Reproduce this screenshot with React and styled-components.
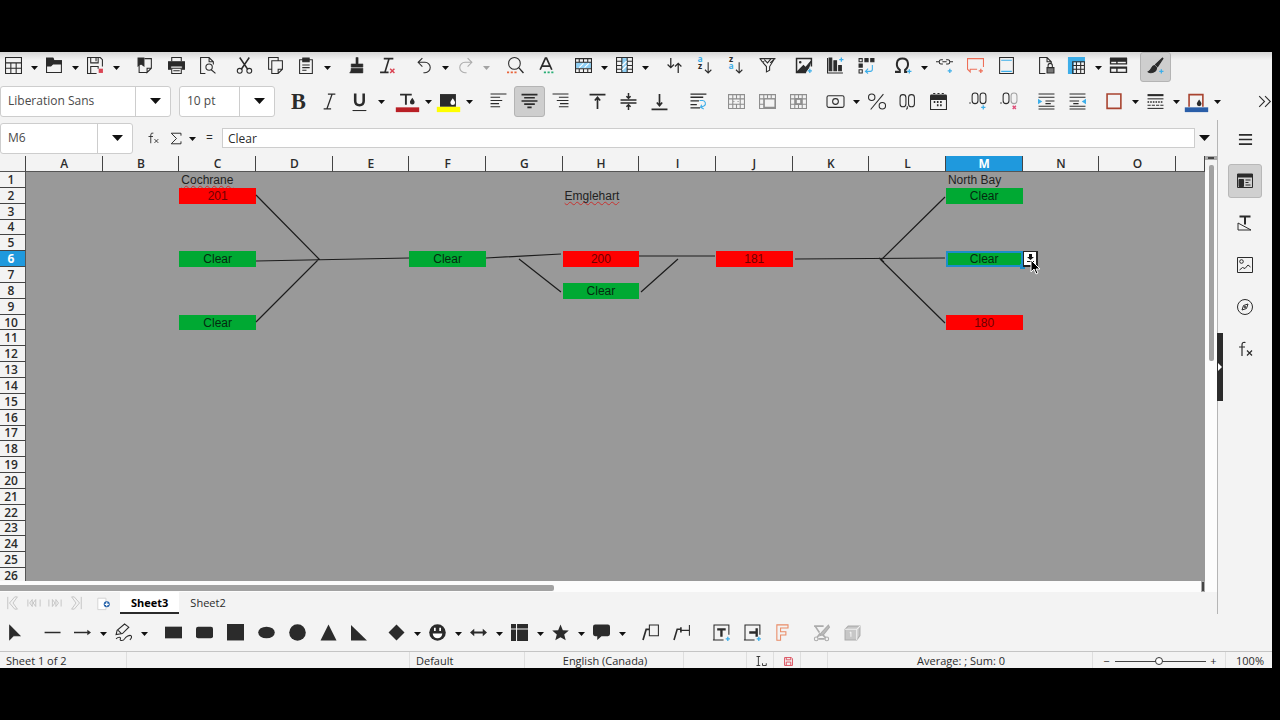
import React from "react";
import styled, { createGlobalStyle, css } from "styled-components";

const ink = "#2b2b2b";
const blue = "#3daee9";
const panel = "#f3f3f3";
const uiFont = '"Open Sans", "Noto Sans", sans-serif';
const cellFont = '"Liberation Sans", Arial, sans-serif';

const GlobalStyle = createGlobalStyle`
  *, *::before, *::after { box-sizing: border-box; }
  body { margin: 0; background: #000; font: 12px/16px ${uiFont}; color: #2b2b2b; }
  button, input, select { font: inherit; color: inherit; margin: 0; }
`;

const Screen = styled.div`
  display: flex;
  height: 100vh;
  padding: 52px 8px 52px 0;
  background: #000;
`;

const Window = styled.main`
  flex: 1;
  min-width: 0;
  display: flex;
  flex-direction: column;
  overflow: hidden;
  background: linear-gradient(#d6d6d6, ${panel} 8px);
`;

const Bar = styled.div`
  display: flex;
  flex: none;
  align-items: ${(p) => (p.$stretch ? "stretch" : "center")};
  height: ${(p) => p.$height}px;
  margin-left: ${(p) => p.$shift || 0}px;
`;

const Gap = styled.span`
  flex: none;
  width: ${(p) => (p.$wide ? 9 : 6)}px;
`;

const ToolButton = styled.button`
  flex: none;
  display: flex;
  align-items: center;
  justify-content: center;
  width: 31px;
  height: ${(p) => (p.$short ? "auto" : "31px")};
  padding: ${(p) => (p.$short ? "0 0 4px" : "0")};
  border: 1px solid transparent;
  border-radius: 3px;
  background: none;
  opacity: ${(p) => (p.disabled ? 0.35 : 1)};
  ${(p) =>
    p.$active &&
    css`
      background: #cecece;
      border-color: #b4b4b4;
    `}
`;

const MenuButton = styled.button`
  flex: none;
  display: flex;
  align-items: center;
  justify-content: center;
  width: 10px;
  padding: 2px 0 0;
  border: 0;
  background: none;
  opacity: ${(p) => (p.disabled ? 0.35 : 1)};
`;

const Glyph = styled.svg`
  display: block;
  flex: none;
  overflow: visible;
  fill: none;
  stroke: ${ink};
  text {
    stroke: none;
    fill: ${ink};
  }
`;

const ComboBox = styled.div`
  position: relative;
  flex: none;
  width: ${(p) => p.$width}px;
  height: 31px;
  margin-right: 8px;
`;

const ComboSelect = styled.select`
  appearance: none;
  width: 100%;
  height: 100%;
  padding: 0 36px 0 7px;
  border: 1px solid #cdcdcd;
  border-radius: 3px;
  background: #fff;
  color: #4a4a4a;
`;

const ComboArrow = styled.span`
  position: absolute;
  top: 1px;
  right: 1px;
  bottom: 1px;
  width: 35px;
  display: flex;
  align-items: center;
  justify-content: center;
  padding-left: 4px;
  border-left: 1px solid #cdcdcd;
  pointer-events: none;
`;

const OverflowButton = styled(ToolButton)`
  width: 16px;
  margin-left: auto;
`;

const Workspace = styled.div`
  flex: 1;
  min-height: 0;
  display: flex;
`;

const Document = styled.div`
  flex: 1;
  min-width: 0;
  display: flex;
  flex-direction: column;
`;

const FormulaBar = styled(Bar)`
  padding-right: 4px;
`;

const FormulaButton = styled.button`
  flex: none;
  display: flex;
  align-items: center;
  justify-content: center;
  width: ${(p) => p.$width}px;
  height: 24px;
  padding: 0;
  border: 0;
  background: none;
`;

const FormulaInput = styled.input`
  flex: 1;
  min-width: 0;
  height: 20px;
  padding: 0 5px;
  border: 1px solid #cdcdcd;
  background: #fff;
`;

const SheetArea = styled.div`
  flex: 1;
  min-height: 0;
  display: flex;
`;

const Canvas = styled.div`
  position: relative;
  flex: 1;
  min-width: 0;
  overflow: hidden;
  background: #999;
`;

const Grid = styled.table`
  width: 100%;
  height: 428px;
  table-layout: fixed;
  border-collapse: separate;
  border-spacing: 0;
`;

const headCell = css`
  background: ${(p) => (p.$selected ? "#1f99dd" : panel)};
  color: ${(p) => (p.$selected ? "#fff" : ink)};
  font-weight: ${(p) => (p.$selected ? 700 : 600)};
  line-height: 13px;
`;

const ColumnHead = styled.th`
  ${headCell}
  height: 16px;
  padding: 0 0 0 1px;
  border-right: 1px solid #444;
  border-bottom: 1px solid #555;
`;

const RowHead = styled.th`
  ${headCell}
  padding: 0 3px 0 0;
  border-right: 1px solid #555;
  border-bottom: 1px solid #444;
`;

const fills = { red: "#ff0000", green: "#00a933" };
const texts = { red: "#6e0000", green: "#042b10" };

const Cell = styled.td`
  position: relative;
  padding: ${(p) => (p.$tone ? "1px 0 0" : "1px 0 0 2px")};
  background: ${(p) => fills[p.$tone] || "transparent"};
  color: ${(p) => texts[p.$tone] || "#222"};
  font: 12px/13px ${cellFont};
  white-space: nowrap;
  text-align: ${(p) => (p.$tone ? "center" : "left")};
  ${(p) =>
    p.$selected &&
    css`
      box-shadow: inset 0 0 0 2px #1c8ec9;
    `}
`;

const Misspelt = styled.span`
  text-decoration: underline wavy #c8322f 1px;
  text-decoration-skip-ink: none;
  text-underline-offset: 1px;
`;

const FillHandle = styled.span`
  position: absolute;
  right: -2px;
  bottom: -2px;
  width: 5px;
  height: 5px;
  background: #1c8ec9;
`;

const CellMenu = styled.button`
  position: absolute;
  z-index: 2;
  left: 100%;
  top: 0;
  width: 15px;
  height: 16px;
  padding: 0;
  border: 1px solid #222;
  border-width: 1px 2px 2px 1px;
  background: #fff;
`;

const Pointer = styled.svg`
  position: absolute;
  z-index: 3;
  left: calc(100% + 7px);
  top: 8px;
`;

const Tracks = styled.svg`
  position: absolute;
  left: 0;
  top: 0;
  width: 100%;
  height: 428px;
  pointer-events: none;
`;

const VerticalScroll = styled.div`
  flex: none;
  width: 12px;
  display: flex;
  flex-direction: column;
  align-items: center;
  background: linear-gradient(${panel} 14px, #fcfcfc 14px);
`;

const SplitTop = styled.span`
  width: 12px;
  height: 4px;
  margin-bottom: 5px;
  border: 1px solid #aaa;
  border-width: 1px 3px;
  background: #444;
`;

const VerticalThumb = styled.span`
  width: 5px;
  height: 46%;
  border-radius: 2px;
  background: #a2a2a2;
`;

const HorizontalScroll = styled.div`
  flex: none;
  height: 11px;
  display: flex;
  align-items: center;
  justify-content: space-between;
  padding-right: 12px;
  background: #fcfcfc;
`;

const HorizontalThumb = styled.span`
  width: 46%;
  height: 6px;
  margin-top: 2px;
  border-radius: 0 2px 2px 0;
  background: #a2a2a2;
`;

const SplitSide = styled.span`
  width: 4px;
  height: 11px;
  border: 1px solid #aaa;
  background: #444;
`;

const TabBar = styled.div`
  flex: none;
  display: flex;
  height: 22px;
  padding-left: 2px;
`;

const TabTool = styled.button`
  width: ${(p) => (p.$add ? 34 : 21)}px;
  padding: 0;
  border: 0;
  background: none;
  display: flex;
  align-items: center;
  justify-content: center;
`;

const SheetTab = styled.button`
  height: 22px;
  padding: 2px 11px 0;
  border: 0;
  border-bottom: 2px solid ${(p) => (p.$active ? "#2b2b2b" : "transparent")};
  background: ${(p) => (p.$active ? "#fff" : "none")};
  color: ${(p) => (p.$active ? "#000" : ink)};
  font-size: 11px;
  font-weight: ${(p) => (p.$active ? 700 : 400)};
`;

const Sidebar = styled.aside`
  position: relative;
  flex: none;
  width: 55px;
  display: flex;
  flex-direction: column;
  align-items: center;
  gap: 8px;
  padding-top: 2px;
  border-left: 1px solid #b5b5b5;
`;

const SideButton = styled.button`
  width: 34px;
  height: 34px;
  padding: 0;
  display: flex;
  align-items: center;
  justify-content: center;
  border: 1px solid ${(p) => (p.$active ? "#b8b8b8" : "transparent")};
  border-radius: 3px;
  background: ${(p) => (p.$active ? "#d0d0d0" : "none")};
`;

const SideHandle = styled.button`
  position: absolute;
  left: -1px;
  top: 50%;
  width: 6px;
  height: 68px;
  margin-top: -34px;
  padding: 0;
  border: 0;
  background: #2b2b2b;
`;

const StatusBar = styled.footer`
  flex: none;
  display: grid;
  grid-template-columns: 127px 283fr 115fr 159fr 63px 27px 27px 27px 265fr 133px 46px;
  height: 17px;
  border-top: 1px solid #c4c4c4;
  font-size: 11px;
  line-height: 14px;
`;

const StatusField = styled.div`
  display: flex;
  align-items: center;
  justify-content: ${(p) => (p.$start ? "flex-start" : "center")};
  padding: 2px 0 0 ${(p) => (p.$start ? 6 : 2)}px;
  border-right: 1px solid #dedede;
  white-space: nowrap;
  &:last-child {
    border-right: 0;
  }
`;

const ZoomStep = styled.button`
  width: 16px;
  height: 14px;
  padding: 0;
  border: 0;
  background: none;
  line-height: 14px;
`;

const ZoomRange = styled.input`
  appearance: none;
  width: 91px;
  height: 9px;
  background: linear-gradient(transparent 4px, #444 4px, #444 5px, transparent 5px);
  &::-webkit-slider-thumb {
    appearance: none;
    width: 8px;
    height: 8px;
    border: 1px solid #333;
    border-radius: 50%;
    background: #fff;
  }
`;

const T = ({ x = 8, y = 14, size = 17, children, ...rest }) => (
  <text x={x} y={y} fontSize={size} textAnchor="middle" fontFamily="Open Sans" {...rest}>
    {children}
  </text>
);
const Plus = ({ x = 13, y = 13, color = blue }) => (
  <path d={`M${x - 2} ${y}h4M${x} ${y - 2}v4`} stroke={color} strokeWidth="1.2" />
);
const mergeGrid = "M.5 1.5h15v13h-15zM.5 5.5h15M.5 10.5h15M4.5 1.5v13M11.5 1.5v13M8 1.5v4M8 10.5v4";
const Drop = ({ x, y, fill = ink }) => (
  <path d={`M${x} ${y}c1.5 2.2 2.2 3 2.2 4.2a2.2 2.2 0 0 1-4.4 0c0-1.2.7-2 2.2-4.2z`} fill={fill} stroke="none" />
);

const icons = {
  sheet: <path d="M.5 .5h15v15h-15zM.5 5.500h15M.5 10.500h15M5.500 5.500v10M10.500 5.500v10" />,
  open: <><path d="M.5 14.500v-13h6l1 2h7v11z" /><path d="M.5 1h6l1 2.500h7v3h-8l-2 2h-4z" fill={ink} /></>,
  save: <><path d="M9 15.500H.5V.5h12l2 2V9M3.500 .5v5h7v-5M8.500 1v3M3.500 15V9h7v2" /><path d="M11 11h4v4h-4z" fill="#da4453" stroke="none" /></>,
  exportDoc: <><path d="M2 8v6.500h7M7 1.500h6.500v9l-4 4v-4h4M4 14.500h5" /><path d="M1 1h5.500v7.500l-2.700-2L1 8.500z" fill={ink} /></>,
  print: <><path d="M3.500 4V.5h9V4M3.500 10.500h9v5h-9zM5 13h6" /><path d="M.5 4.500h15v7h-2v-3h-11v3h-2z" fill={ink} /></>,
  preview: <><path d="M6 15.500H1.500V.5h8l4 4V7M9.500 .5v4h4" /><circle cx="9.500" cy="9.500" r="3" /><path d="M11.500 12l4 3.500" /></>,
  cut: <><path d="M3.500 .5l7.500 11M12.500 .5L5 11.500" strokeWidth="1.400" /><circle cx="3.500" cy="13" r="2.300" /><circle cx="12.500" cy="13" r="2.300" /></>,
  copy: <path d="M4 11.500H1.500v-11h9V3M4.500 3.500h10v8l-4 4h-6zM10.500 15v-3.500h4" />,
  paste: <><path d="M1.500 2.500h12v13h-12zM4 7.500h7M4 10h7M4 12.500h4" /><path d="M4.500 1h6v3.500h-6z" fill={ink} /></>,
  brush: <path d="M7.500 .5h2v6h4.500v3H3v-3h4.500zM3 10.500h11v4.500H1.500c1-1 1.500-2 1.500-4.500z" fill={ink} strokeWidth=".5" />,
  clear: <><path d="M4.500 1.500h9M1 14.500h8M9.500 1.500l-4 13" strokeWidth="1.500" /><path d="M10.500 11l4 4M14.500 11l-4 4" stroke="#da4453" strokeWidth="1.400" /></>,
  undo: <path d="M6 1L2 5l4 4M2 5h6.500a4.800 4.800 0 0 1 0 9.800H7" />,
  redo: <path d="M10 1l4 4-4 4M14 5H7.500a4.800 4.800 0 0 0 0 9.800H9" />,
  find: <><circle cx="7" cy="6" r="5.500" /><path d="M11 10l4.500 5" strokeWidth="1.300" /><path d="M0 14.500h2M3.500 14.500h2M7 14.500h2" stroke="#e9643a" strokeWidth="1.500" /></>,
  spell: <><path d="M2 12L7 1h1l5 11M4 8.500h7" strokeWidth="1.600" /><path d="M5.500 14.500h2M9 14.500h2M12.500 14.500h2" stroke="#27ae75" strokeWidth="1.500" /></>,
  row: <><path d="M1 5h14v5.500H1z" fill="#8fd0f5" stroke="none" /><path d="M.5 1.500h15v13h-15zM.5 5h15M.5 11h15M4 1.500V5M8 1.500V5M12 1.500V5M4 11v3.500M8 11v3.500M12 11v3.500" /><path d="M4 10l4-4M9 10l4-4" stroke="#fff" /></>,
  column: <><path d="M5.500 1h5v14h-5z" fill="#8fd0f5" stroke="none" /><path d="M.5 .5h15v14h-15zM5.500 .5v14M10.500 .5v14M.5 4h5M.5 8h5M.5 11.500h5M10.500 4h5M10.500 8h5M10.500 11.500h5" /><path d="M6 8l4-4M6 12l4-4" stroke="#fff" /></>,
  sort: <path d="M4.500 1v9M1.500 7l3 3 3-3M11.500 15V6M8.500 9l3-3 3 3" strokeWidth="1.200" />,
  az: <><T x={3} y={5} size={8} fontWeight="700" style={{ fill: blue }}>a</T><T x={3} y={11} size={8} fontWeight="700">z</T><path d="M10.500 5v10M7.500 12l3 3 3-3" /></>,
  za: <><T x={3} y={5} size={8} fontWeight="700">z</T><T x={3} y={11} size={8} fontWeight="700" style={{ fill: blue }}>a</T><path d="M10.500 5v10M7.500 12l3 3 3-3" /></>,
  filter: <path d="M.5 1.500h15M1 1.500l2 3h2M3.500 5l3.500 4v5l3-1.500V9l4-6.500M5 2.500l3 3 3-3.500M10.500 5.500l4-3.500" />,
  image: <><path d="M14.500 9V1.500h-14v13h9" strokeWidth="1.400" /><path d="M1 14l6-6 2 2 5-6-2 6-3 4z" fill={ink} /><circle cx="4" cy="5" r=".7" fill={ink} /><Plus /></>,
  chart: <><path d="M2 1h2.500v12H2zM6.500 3.500H9V13H6.500zM11 8h2.500v5H11z" fill={ink} /><path d="M.5 1v14H15" /><Plus x={13.500} y={2.500} /></>,
  pivot: <><path d="M1 1.500h3v3H1zM1 12h3v3H1z" /><path d="M6.500 1.500h3v3h-3zM12 1.500h3v3h-3zM1 6.500h3v3H1z" fill={ink} /><path d="M13.500 7.500v4a2 2 0 0 1-2 2h-4M9.500 11l-2.500 2.500 2.500 2" stroke={blue} /></>,
  omega: <><path d="M0 14h4.500v-2C.5 9.500.5 1.500 7 1.500s6.500 8 2.500 10.500v2h2" strokeWidth="1.900" /><Plus x={13.500} y={13.500} /></>,
  link: <><path d="M0 4.500h3M6.500 2.500h-2a1.500 2 0 0 0 0 4h2M9.500 2.500h2a1.500 2 0 0 1 0 4h-2M13 4.500h3M6 4.500h4" /><Plus y={13} /></>,
  comment: <><path d="M9.500 11.500H3v2.500L.5 11.500v-10h15v8" stroke="#ee6f58" /><Plus color="#ee6f58" /></>,
  headerFooter: <><path d="M1.500 .5h13v15h-13z" /><path d="M3 3h10M3 13.500h10" stroke={blue} /></>,
  printArea: <><path d="M7 15.500H1.500V.5h7l4 4V6M8.500 .5v4h4M9.500 10V8a2 2 0 0 1 4 0v2" /><path d="M8.500 10h6.500v5H8.500z" fill="#777" /></>,
  freeze: <><path d="M-.5 .5h15v4H4v11H-.5z" fill={blue} stroke={blue} /><path d="M3.500 4.500h11v11h-11zM3.500 8h11M3.500 11.500h11M7 4.500v11M11 4.500v11" /></>,
  split: <><path d="M.5 1h15v3H.5z" fill={ink} /><path d="M.5 1.500h15v5H.5zM.5 9.500h15v5H.5zM6.500 2v5M6.500 9.500v5M.5 10.500h15" strokeWidth="1.300" /></>,
  draw: <><path d="M14.500 1L8 7l2 2 5-7.500zM7 8c-3 0-2 4-6 6 3 2 8 0 8-4z" fill={ink} /><Plus x={13.500} y={13.500} /></>,
  bold: <T size={21} y={15} fontWeight="700" fontFamily="Liberation Serif">B</T>,
  italic: <path d="M6.500 1h7M2.500 15h7M10.500 1l-5 14" strokeWidth="1.200" />,
  underline: <><path d="M3 .5v7q0 4 4 4t4-4v-7" strokeWidth="2.400" /><path d="M.5 16.500h13" /></>,
  fontColor: <><path d="M1 1.500h11M6.500 1.500V11" strokeWidth="1.800" /><Drop x={12.500} y={4.500} /><path d="M-3 13.500h22v4.500H-3z" fill="#b81f25" stroke="none" /></>,
  highlight: <><path d="M0 1h15v12H0z" fill={ink} stroke="none" /><Drop x={12} y={5} fill="#fff" /><path d="M-3 13h22v5H-3z" fill="#ffff00" stroke="none" /></>,
  left: <path d="M.5 1h15M.5 4h9M.5 7h11M.5 10h8M.5 13h9" />,
  center: <path d="M.5 1.500h15M3 4.500h10M.5 7.500h15M3 10.500h10M6 13.500h4" strokeWidth="1.500" />,
  right: <path d="M.5 1h15M6.500 4h9M4.500 7h11M7.500 10h8M6.500 13h9" />,
  top: <path d="M.5 1.500h15M8 15V4M5.500 7L8 4l2.500 3" strokeWidth="1.600" />,
  middle: <path d="M.5 6.500h15M.5 9.500h15M8 0v5M6 3l2 2 2-2M8 16v-5M6 13l2-2 2 2" strokeWidth="1.400" />,
  bottom: <path d="M.5 15.500h15M8 1v11M5.500 9L8 12l2.500-3" strokeWidth="1.600" />,
  wrap: <><path d="M-.5 1h15M-.5 4h12M-.5 7.500h8M-.5 11h6M-.5 14h9" strokeWidth="1.200" /><path d="M8 7h3a2.800 2.800 0 0 1 1.500 5l-3 1.500M12 15l-3-1.500 1-2.500" stroke={blue} /></>,
  merge: <g opacity=".5"><path d={mergeGrid} /><path d="M5 8h2M9 8h2" strokeDasharray="1 1" /></g>,
  mergeCells: <g opacity=".5"><path d={mergeGrid} /><path d="M5 5.500h10v8H5z" fill={panel} /></g>,
  unmerge: <g opacity=".5"><path d={mergeGrid} /><path d="M5.500 5.500h5v5h-5z" strokeWidth="1.800" /></g>,
  currency: <><rect x="0" y="2.500" width="16" height="11" rx="1.500" /><circle cx="8" cy="8" r="2.700" /></>,
  percent: <><circle cx="3.500" cy="4" r="3" /><circle cx="13.500" cy="12" r="3" /><path d="M14.500 1L2.500 15.500" /></>,
  number: <><rect x="1" y="1.500" width="5.500" height="11.500" rx="2.700" /><rect x="9" y="1.500" width="5.500" height="11.500" rx="2.700" /><path d="M7.800 12.500v2l-1 1" /></>,
  date: <><path d="M.5 2.500h15v13h-15z" /><path d="M1 2h14v4H1zM3 .5h2M7 .5h2M11 .5h2" fill={ink} /><path d="M3.500 8.500h9M6.500 11.500h6" strokeWidth="1.800" strokeDasharray="1.500 1.500" /></>,
  addDecimal: <><rect x="2" y="0" width="5.500" height="10" rx="2.700" /><rect x="9.500" y="0" width="5.500" height="10" rx="2.700" /><path d="M-.5 9.500h1" strokeWidth="1.400" /><Plus x={12.500} y={13.500} /></>,
  delDecimal: <><rect x="2" y="0" width="5.500" height="10" rx="2.700" /><rect x="9.500" y="0" width="5.500" height="10" rx="2.700" opacity=".4" /><path d="M-.5 9.500h1" strokeWidth="1.400" /><path d="M11 12l3 3M14 12l-3 3" stroke="#e0507a" strokeWidth="1.400" /></>,
  indent: <><path d="M.5 1h15M.5 4h15M7 7.500h8.500M7 10h5M.5 12.500h15M.5 15h15" /><path d="M0 5.500v5L4 8z" fill={blue} stroke="none" /></>,
  outdent: <><path d="M.5 1h15M.5 4h15M.5 7.500h9M4 10h5M.5 12.500h15M.5 15h15" /><path d="M16 5.500v5L12 8z" fill={blue} stroke="none" /></>,
  border: <path d="M1 1h13v13.500H1z" stroke="#a8432f" strokeWidth="1.500" />,
  lineStyle: <><path d="M.5 2h15" strokeWidth="2" /><path d="M.5 5.500h15" /><path d="M.5 8.500h15" strokeWidth="1.500" strokeDasharray="1.500 1" /><path d="M.5 11.500h15" strokeDasharray="3 1" /><path d="M.5 14.500h15" /></>,
  lineColor: <><path d="M1 13V1.500h13V13" stroke="#a8432f" strokeWidth="1.500" /><Drop x={10.500} y={6} /><path d="M-3 13.500h22v4.500H-3z" fill="#2a5ea8" stroke="none" /></>,
  more: <path d="M3 3l5 5-5 5M8.500 3l5 5-5 5" />,
  sum: <path d="M13.500 4.500v-3h-12L8 8l-6.500 6.500h12v-3" strokeWidth="1.200" />,
  menu: <path d="M1 3h14M1 8h14M1 13h14" strokeWidth="1.800" />,
  properties: <><path d="M.5 1.500h15v13H.5z" /><path d="M.5 1h15v3H.5z M2 6.500h4.500v7H2z" fill={ink} /><path d="M8.500 7h5M8.500 9.500h3M8.500 12h5" /></>,
  styles: <><path d="M2.500 1.500h11M8 1.500v8" strokeWidth="2" /><path d="M1 8v7h13z" /></>,
  gallery: <><path d="M.5 .5h15v15H.5zM2.500 13l3-2.500 2.500 1 3-3.500 2.500 2" /><circle cx="4.500" cy="4.500" r="1.800" /></>,
  navigator: <><circle cx="8" cy="8" r="7.500" /><path d="M11 5L9.500 9.500 5 11l1.500-4.500z" /><circle cx="8" cy="8" r=".8" /></>,
  fx: <path d="M8.500 1.500q-3.500-1-3.500 2.500v11M2 6h6M10 9.500l5 5M15 9.500l-5 5" strokeWidth="1.200" />,
  select: <path d="M3.500 1.500v13l3.500-3.500H13z" fill={ink} />,
  line: <path d="M1.500 8h15" strokeWidth="1.400" />,
  arrow: <><path d="M0 8h13" strokeWidth="1.400" /><path d="M12.500 5.500v5L16 8z" fill={ink} stroke="none" /></>,
  pencil: <path d="M1 10l1-4 7-6 4 3-6 6-6 1zM3 6l3 3M1 14c2-2 5-2 4 0s3 2 4 0 5-4 6-3 0 3-1 4" />,
  rect: <path d="M0 2.500h16v11H0z" fill={ink} stroke="none" />,
  roundRect: <rect x="0" y="2.500" width="16" height="11" rx="2" fill={ink} stroke="none" />,
  square: <path d="M0 0h16v15.500H0z" fill={ink} stroke="none" />,
  ellipse: <ellipse cx="8" cy="8" rx="7.800" ry="5.500" fill={ink} stroke="none" />,
  circle: <circle cx="8" cy="8" r="7.800" fill={ink} stroke="none" />,
  triangle: <path d="M8 .5l7.500 15H.5z" fill={ink} stroke="none" />,
  rightTriangle: <path d="M0 1v14.500h15z" fill={ink} stroke="none" />,
  diamond: <path d="M8 .5L15.500 8 8 15.500.5 8z" fill={ink} stroke="none" />,
  smiley: <><circle cx="8" cy="8" r="7.800" fill={ink} stroke="none" /><path d="M3.500 9h9a4.500 4.500 0 0 1-9 0z" fill="#fff" stroke="none" /><path d="M5.500 3.500v3M10.500 3.500v3" stroke="#fff" strokeWidth="1.600" /></>,
  doubleArrow: <path d="M0 8l4-3.500V7h8V4.500L16 8l-4 3.500V9H4v2.500z" fill={ink} stroke="none" />,
  flow: <><path d="M0 0h16v16H0z" fill={ink} stroke="none" /><path d="M5.200 0v16M0 4.700h16" stroke={panel} /></>,
  star: <path d="M8 .5l2.200 5.300 5.600.4-4.300 3.600 1.400 5.600L8 12.400l-4.900 3 1.400-5.600L.2 6.200l5.600-.4z" fill={ink} stroke="none" />,
  callout: <path d="M2 .5h12a2 2 0 0 1 2 2v7a2 2 0 0 1-2 2H8L4 15v-3.500H2a2 2 0 0 1-2-2v-7a2 2 0 0 1 2-2z" fill={ink} stroke="none" />,
  calloutLine: <><path d="M6 1h8.500v10H6z" /><path d="M6 5H3L0 15" strokeWidth="1.600" /></>,
  calloutSide: <><path d="M14.500 1v10M6 6h8.500" /><path d="M6.500 3v5M6 5H3L0 15" strokeWidth="1.500" /></>,
  textBox: <><path d="M-.5 1h15M14 1v9M9 15H0V1M-1 15h2" /><path d="M3 5h8M7 5v7" strokeWidth="2.200" /><Plus x={13} y={14} /></>,
  verticalText: <><path d="M-.5 1h15M14 1v9M9 15H0V1M-1 15h2" /><path d="M11 4v8M4 8h7" strokeWidth="2.200" /><Plus x={13} y={14} /></>,
  fontwork: <path d="M.8 .8h10.500v3h-7v3.500h5v3h-5v5H.8z" stroke="#e98b66" />,
  points: <><path d="M1 2h9M2 2l4 6M5 14h6M4 12.500l3-4M9 10l3 3" strokeWidth="1.500" /><circle cx="3" cy="14" r="1.700" /><circle cx="13" cy="14" r="1.700" /><path d="M14.500 1L8 8l-1.500 3L10 10l5.500-7z" fill="#555" /></>,
  extrusion: <><path d="M1 5l3-3h11v9l-3 4H1z" fill="#777" /><path d="M1 5h11v10M12 5l3-3M6.500 12V7.500M5.500 8.500l1-1" stroke="#eee" /></>,
  first: <path d="M2 1v14M10 1L4 8l6 7h3L8 8l5-7z" />,
  prev: <path d="M1 4v8M6 4L3 8l3 4zM10 4L7 8l3 4zM15 4v8" />,
  next: <path d="M1 4v8M5 4l3 4-3 4zM9 4l3 4-3 4zM15 4v8" />,
  last: <path d="M14 1v14M6 1l6 7-6 7H3l5-7-5-7z" />,
  addSheet: <><path d="M1 1.500h10v14H1z" fill="#fff" stroke="#ccc" /><circle cx="12" cy="9" r="3.700" fill="#215fa8" stroke="none" /><path d="M12 6.500v5M9.500 9h5" stroke="#fff" strokeWidth="1.500" /></>,
  insertMode: <path d="M2 2h5M2 14h5M4.500 2v12M10 11v3h5v-3" strokeWidth="1.200" />,
  modified: <path d="M1 1h12l2 2v12H1zM4 1v4h8V1M4 15V9h8v6" stroke="#da4453" strokeWidth="1.600" />,
};

const Icon = ({ name, size = 17 }) => (
  <Glyph width={size} height={size} viewBox="0 0 16 16" aria-hidden="true">
    {icons[name]}
  </Glyph>
);

const Triangle = ({ large }) => (
  <svg width={large ? 11 : 7} height={large ? 6 : 4} viewBox="0 0 12 7" preserveAspectRatio="none" aria-hidden="true">
    <path d="M0 0h12L6 7z" fill="#111" />
  </svg>
);

/* "-" is a narrow gap, "=" a wide one; a trailing "+" gives the button a menu. */
const standardTools =
  "sheet+ open+ save+ = exportDoc print preview - cut copy paste+ = brush clear - undo+ redo+ = find spell - row+ column+ = sort az za filter - image chart pivot - omega+ link comment headerFooter = printArea freeze+ split - draw";
const formatTools =
  "bold italic underline+ - fontColor+ highlight+ = left center right - top middle bottom = wrap - merge mergeCells unmerge - currency+ percent number date = addDecimal delDecimal - indent outdent - border+ lineStyle+ lineColor+";
const drawTools =
  "select - line arrow+ pencil+ = rect roundRect square ellipse circle triangle rightTriangle - diamond+ smiley+ doubleArrow+ flow+ star+ callout+ = calloutLine calloutSide = textBox verticalText fontwork - points extrusion";

const Tools = ({ spec, active, disabled = [], short }) =>
  spec.split(" ").map((item, i) => {
    if (item === "-" || item === "=") return <Gap key={i} $wide={item === "="} />;
    const name = item.replace("+", "");
    const off = disabled.includes(name);
    return (
      <React.Fragment key={i}>
        <ToolButton type="button" aria-label={name} $active={name === active} $short={short} disabled={off}>
          <Icon name={name} />
        </ToolButton>
        {item.endsWith("+") && (
          <MenuButton type="button" aria-label={`${name} options`} disabled={off}>
            <Triangle />
          </MenuButton>
        )}
      </React.Fragment>
    );
  });

const Combo = ({ label, value, width }) => (
  <ComboBox $width={width}>
    <ComboSelect aria-label={label} defaultValue={value}>
      <option>{value}</option>
    </ComboSelect>
    <ComboArrow>
      <Triangle large />
    </ComboArrow>
  </ComboBox>
);

const columns = "ABCDEFGHIJKLMNO".split("");
const rows = Array.from({ length: 26 }, (_, i) => i + 1);
const cells = {
  C1: { text: "Cochrane", misspelt: true },
  M1: { text: "North Bay" },
  C2: { text: "201", tone: "red" },
  H2: { text: "Emglehart", misspelt: true },
  M2: { text: "Clear", tone: "green" },
  C6: { text: "Clear", tone: "green" },
  F6: { text: "Clear", tone: "green" },
  H6: { text: "200", tone: "red" },
  J6: { text: "181", tone: "red" },
  M6: { text: "Clear", tone: "green", selected: true },
  H8: { text: "Clear", tone: "green" },
  C10: { text: "Clear", tone: "green" },
  M10: { text: "180", tone: "red" },
};

const SheetCell = ({ id }) => {
  const cell = cells[id];
  if (!cell) return <Cell />;
  return (
    <Cell $tone={cell.tone} $selected={cell.selected}>
      {cell.misspelt ? <Misspelt>{cell.text}</Misspelt> : cell.text}
      {cell.selected && (
        <>
          <FillHandle />
          <CellMenu type="button" aria-label="Choose value">
            <svg width="10" height="12" viewBox="0 0 10 12" aria-hidden="true">
              <path d="M4 2h3v3h2L5.500 8 2 5h2zM2 9h7v1H2z" fill="#111" />
            </svg>
          </CellMenu>
          <Pointer width="11" height="16" viewBox="0 0 11 16" aria-hidden="true">
            <path d="M1 1v12l3-3 2 5 2-1-2-4h4z" fill="#000" stroke="#fff" />
          </Pointer>
        </>
      )}
    </Cell>
  );
};

export default function App() {
  return (
    <Screen>
      <GlobalStyle />
      <Window>
        <Bar $height={30} $shift={-2} $stretch>
          <Tools spec={standardTools} active="draw" disabled={["redo"]} short />
        </Bar>
        <Bar $height={38}>
          <Combo label="Font name" value="Liberation Sans" width={171} />
          <Combo label="Font size" value="10 pt" width={96} />
          <Tools spec={formatTools} active="center" />
          <OverflowButton type="button" aria-label="More tools">
            <Icon name="more" />
          </OverflowButton>
        </Bar>
        <Workspace>
          <Document>
            <FormulaBar $height={36}>
              <Combo label="Name box" value="M6" width={133} />
              <FormulaButton type="button" aria-label="Function wizard" $width={24}>
                <Icon name="fx" size={12} />
              </FormulaButton>
              <FormulaButton type="button" aria-label="Select function" $width={22}>
                <Icon name="sum" size={13} />
              </FormulaButton>
              <MenuButton type="button" aria-label="Function options">
                <Triangle />
              </MenuButton>
              <FormulaButton type="button" $width={25}>=</FormulaButton>
              <FormulaInput aria-label="Formula" defaultValue="Clear" />
              <FormulaButton type="button" aria-label="Expand formula bar" $width={18}>
                <Triangle large />
              </FormulaButton>
            </FormulaBar>
            <SheetArea>
              <Canvas>
                <Grid>
                  <colgroup>
                    <col width="26" />
                    {columns.map((c) => (
                      <col key={c} />
                    ))}
                    <col width="29" />
                  </colgroup>
                  <thead>
                    <tr>
                      <ColumnHead />
                      {columns.map((c) => (
                        <ColumnHead key={c} scope="col" $selected={c === "M"}>{c}</ColumnHead>
                      ))}
                      <ColumnHead />
                    </tr>
                  </thead>
                  <tbody>
                    {rows.map((r) => (
                      <tr key={r}>
                        <RowHead scope="row" $selected={r === 6}>{r}</RowHead>
                        {columns.map((c) => (
                          <SheetCell key={c} id={c + r} />
                        ))}
                        <Cell />
                      </tr>
                    ))}
                  </tbody>
                </Grid>
                <Tracks viewBox="0 0 1205 428" preserveAspectRatio="none" aria-hidden="true">
                  <path
                    d="M256 39L319 103L256 166M256 105L409 102M486 102L561 98M519 103L561 136M639 100H715M678 103L641 136M795 103L945 102M945 41L881 104L945 167M879 102L884 106"
                    fill="none"
                    stroke="#1c1c1c"
                    strokeWidth="1.200"
                  />
                </Tracks>
              </Canvas>
              <VerticalScroll>
                <SplitTop />
                <VerticalThumb />
              </VerticalScroll>
            </SheetArea>
            <HorizontalScroll>
              <HorizontalThumb />
              <SplitSide />
            </HorizontalScroll>
            <TabBar>
              {["first", "prev", "next", "last"].map((n) => (
                <TabTool key={n} type="button" aria-label={`${n} sheet`} disabled>
                  <Glyph width="14" height="14" viewBox="0 0 16 16" opacity=".25">{icons[n]}</Glyph>
                </TabTool>
              ))}
              <TabTool type="button" aria-label="Add sheet" $add>
                <Icon name="addSheet" size={13} />
              </TabTool>
              <SheetTab type="button" $active>Sheet3</SheetTab>
              <SheetTab type="button">Sheet2</SheetTab>
            </TabBar>
          </Document>
          <Sidebar>
            <SideHandle type="button" aria-label="Hide sidebar">
              <svg width="6" height="8" viewBox="0 0 6 8" aria-hidden="true">
                <path d="M1 0v8l4-4z" fill="#fff" />
              </svg>
            </SideHandle>
            {["menu", "properties", "styles", "gallery", "navigator", "fx"].map((n) => (
              <SideButton key={n} type="button" aria-label={n} $active={n === "properties"}>
                <Icon name={n} size={n === "menu" ? 15 : 16} />
              </SideButton>
            ))}
          </Sidebar>
        </Workspace>
        <Bar $height={37} $shift={-1}>
          <Tools spec={drawTools} disabled={["points", "extrusion"]} />
        </Bar>
        <StatusBar>
          <StatusField $start>Sheet 1 of 2</StatusField>
          <StatusField />
          <StatusField $start>Default</StatusField>
          <StatusField>English (Canada)</StatusField>
          <StatusField />
          <StatusField><Icon name="insertMode" size={12} /></StatusField>
          <StatusField><Icon name="modified" size={9} /></StatusField>
          <StatusField />
          <StatusField>Average: ; Sum: 0</StatusField>
          <StatusField>
            <ZoomStep type="button" aria-label="Zoom out">−</ZoomStep>
            <ZoomRange type="range" aria-label="Zoom" min="0" max="100" defaultValue="49" />
            <ZoomStep type="button" aria-label="Zoom in">+</ZoomStep>
          </StatusField>
          <StatusField>100%</StatusField>
        </StatusBar>
      </Window>
    </Screen>
  );
}
